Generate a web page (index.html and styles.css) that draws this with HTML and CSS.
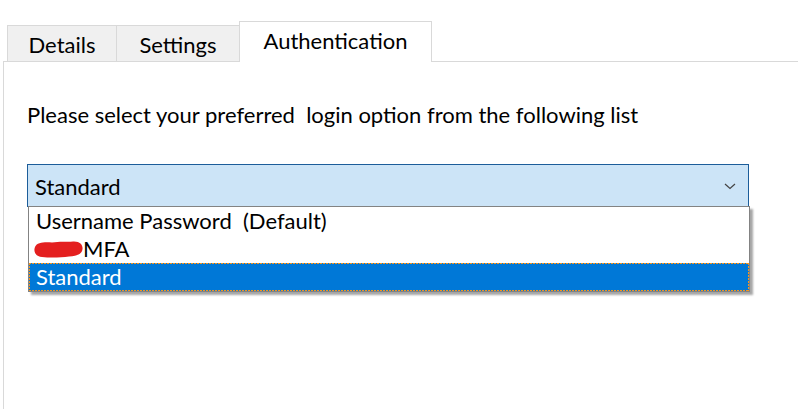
FILE: index.html
```html
<!DOCTYPE html>
<html>
<head>
<meta charset="utf-8">
<link rel="stylesheet" href="styles.css">
</head>
<body>
<div class="window">
  <div class="tabs">
    <div class="tab tab-details">Details</div>
    <div class="tab tab-settings">Settings</div>
    <div class="tab tab-active">Authentication</div>
  </div>
  <div class="panel">
    <p class="prompt">Please select your preferred&nbsp; login option from the following list</p>
    <div class="combo-wrap">
      <div class="combo">
        <span class="combo-value">Standard</span>
        <svg class="chevron" width="12" height="7" viewBox="0 0 12 7"><polyline points="1,1 6,5.5 11,1" fill="none" stroke="#444" stroke-width="1.2"/></svg>
      </div>
      <ul class="list">
        <li class="item">Username Password&nbsp; (Default)</li>
        <li class="item"><svg class="redact" width="50" height="17" viewBox="0 0 50 17"><path d="M2 6 C4 1, 12 1, 19 1.5 C26 0, 34 1, 40 0.5 C47 0, 50 4, 49.5 8 C49 13, 44 15, 36 15.5 C28 16.5, 18 17, 9 16 C3 15.5, 0 11, 2 6 Z" fill="#e41f1f"/></svg>MFA</li>
        <li class="item item-selected"><span>Standard</span></li>
      </ul>
    </div>
  </div>
</div>
</body>
</html>
```
FILE: styles.css
```css
html, body {
  margin: 0;
  padding: 0;
  background: #ffffff;
}
body {
  font-family: "Lato", "Liberation Sans", sans-serif;
  font-size: 22px;
  color: #000000;
}
.window {
  width: 798px;
  height: 409px;
  overflow: hidden;
  padding-top: 21px;
  box-sizing: border-box;
}
.tabs {
  display: flex;
  align-items: flex-end;
  padding-left: 7px;
  height: 40px;
  position: relative;
  z-index: 2;
}
.tab {
  box-sizing: border-box;
  height: 36px;
  border: 1px solid #d9d9d9;
  border-bottom: none;
  background: #f0f0f0;
  display: flex;
  align-items: center;
  justify-content: center;
  padding-top: 2px;
}
.tab-details { width: 110px; }
.tab-settings { width: 124px; margin-left: -1px; }
.tab-active {
  width: 193px;
  height: 41px;
  margin-left: -1px;
  margin-bottom: -1px;
  background: #ffffff;
  padding-top: 0;
  padding-bottom: 4px;
}
.panel {
  margin-left: 3px;
  border-top: 1px solid #d9d9d9;
  border-left: 1px solid #d9d9d9;
  height: 360px;
  padding-left: 23px;
  padding-top: 1px;
}
.prompt {
  margin: 0;
  margin-top: 40px;
  line-height: 24px;
}
.combo-wrap {
  position: relative;
  margin-top: 37px;
  width: 722px;
}
.combo {
  box-sizing: border-box;
  height: 43px;
  border: 1px solid #1c5d9a;
  background: #cce4f7;
  display: flex;
  align-items: center;
  justify-content: space-between;
  padding: 0 12px 0 7px;
}
.combo-value { padding-top: 1px; }
.chevron { margin-top: 1px; }
.list {
  position: absolute;
  left: 1px;
  top: 42px;
  width: 722px;
  box-sizing: border-box;
  margin: 0;
  padding: 0;
  list-style: none;
  background: #ffffff;
  border: 1px solid #838383;
  box-shadow: 3px 3px 2px rgba(0, 0, 0, 0.35);
}
.item {
  height: 28px;
  line-height: 28px;
  padding-left: 7px;
  display: flex;
  align-items: center;
}
.redact {
  margin-left: -3px;
  margin-right: 0;
}
.item-selected {
  position: relative;
  background: #0078d7;
  color: #ffffff;
}
.item-selected::after {
  content: "";
  position: absolute;
  inset: 0;
  background:
    repeating-linear-gradient(90deg, #f7941d 0 2px, transparent 2px 3px) left top / 100% 1px no-repeat,
    repeating-linear-gradient(90deg, #f7941d 0 2px, transparent 2px 3px) left bottom / 100% 1px no-repeat,
    repeating-linear-gradient(180deg, #f7941d 0 2px, transparent 2px 3px) left top / 1px 100% no-repeat,
    repeating-linear-gradient(180deg, #f7941d 0 2px, transparent 2px 3px) right top / 1px 100% no-repeat;
}
```
